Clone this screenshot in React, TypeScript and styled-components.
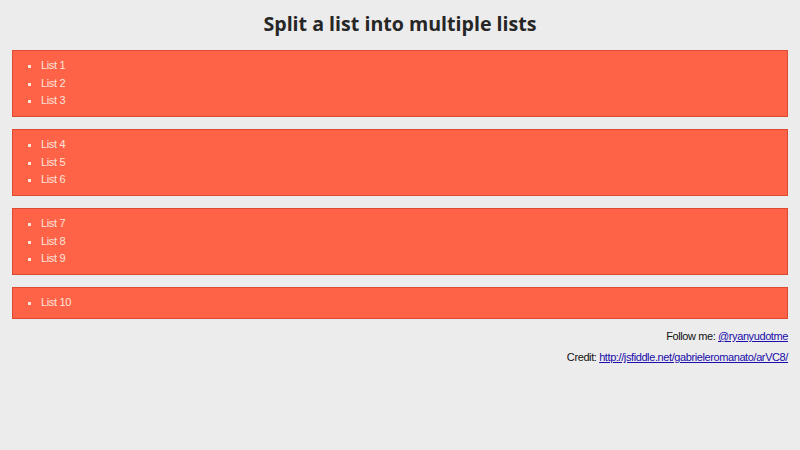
import { createGlobalStyle, styled } from "styled-components";

const Global = createGlobalStyle`
  html, body {
    margin: 0;
    padding: 0;
    background: #ececec;
  }
  body {
    font-family: "Liberation Sans", Arial, sans-serif;
  }
`;

const Page = styled.div`
  padding: 8px 12px 12px;
`;

const Title = styled.h1`
  margin: 0 0 10px;
  font-family: "Open Sans", "Noto Sans", sans-serif;
  font-weight: 700;
  font-size: 19.6px;
  line-height: 32px;
  text-align: center;
  color: #262626;
`;

const Lists = styled.div`
  display: flex;
  flex-direction: column;
  gap: 12px;
`;

const ListBox = styled.ul`
  margin: 0;
  padding: 6px 0 6.5px 28px;
  background: #ff6347;
  border: 1px solid #dc4a33;
  list-style: square;
  color: #fbe4dc;
  font-size: 11px;
  letter-spacing: -0.35px;
  line-height: 17.5px;
`;

const Footer = styled.div`
  margin-top: 8px;
  text-align: right;
  font-size: 11px;
  letter-spacing: -0.4px;
  line-height: 18px;
  color: #111;
`;

const Line = styled.p`
  margin: 0 0 3px;
`;

const Link = styled.a`
  color: #1a0dab;
  text-decoration: underline;
`;

const groups = [
  ["List 1", "List 2", "List 3"],
  ["List 4", "List 5", "List 6"],
  ["List 7", "List 8", "List 9"],
  ["List 10"],
];

export default function App() {
  return (
    <Page>
      <Global />
      <Title>Split a list into multiple lists</Title>
      <Lists>
        {groups.map((g, i) => (
          <ListBox key={i}>
            {g.map((item) => (
              <li key={item}>{item}</li>
            ))}
          </ListBox>
        ))}
      </Lists>
      <Footer>
        <Line>
          Follow me: <Link href="#">@ryanyudotme</Link>
        </Line>
        <Line>
          Credit: <Link href="#">http://jsfiddle.net/gabrieleromanato/arVC8/</Link>
        </Line>
      </Footer>
    </Page>
  );
}
